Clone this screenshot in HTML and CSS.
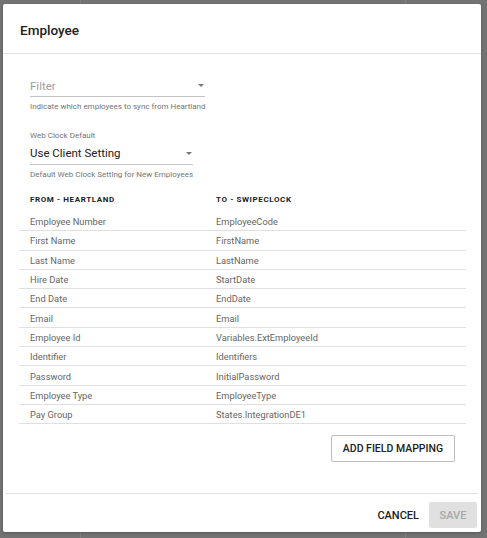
FILE: index.html
```html
<!DOCTYPE html>
<html>
<head>
<meta charset="utf-8">
<link rel="stylesheet" href="styles.css">
</head>
<body>
<div class="dialog">
  <div class="dlg-header"><h2 class="title">Employee</h2></div>
  <div class="dlg-content">
    <div class="field field-filter">
      <div class="select select-filter">
        <span class="placeholder">Filter</span>
        <span class="arrow"></span>
      </div>
      <div class="helper">Indicate which employees to sync from Heartland</div>
    </div>
    <div class="field field-clock">
      <div class="label">Web Clock Default</div>
      <div class="select select-clock">
        <span class="value">Use Client Setting</span>
        <span class="arrow"></span>
      </div>
      <div class="helper">Default Web Clock Setting for New Employees</div>
    </div>
    <div class="table">
      <div class="thead">
        <div class="cell c1">FROM - HEARTLAND</div>
        <div class="cell c2">TO - SWIPECLOCK</div>
      </div>
      <div class="row"><div class="cell c1">Employee Number</div><div class="cell c2">EmployeeCode</div></div>
      <div class="row"><div class="cell c1">First Name</div><div class="cell c2">FirstName</div></div>
      <div class="row"><div class="cell c1">Last Name</div><div class="cell c2">LastName</div></div>
      <div class="row"><div class="cell c1">Hire Date</div><div class="cell c2">StartDate</div></div>
      <div class="row"><div class="cell c1">End Date</div><div class="cell c2">EndDate</div></div>
      <div class="row"><div class="cell c1">Email</div><div class="cell c2">Email</div></div>
      <div class="row"><div class="cell c1">Employee Id</div><div class="cell c2">Variables.ExtEmployeeId</div></div>
      <div class="row"><div class="cell c1">Identifier</div><div class="cell c2">Identifiers</div></div>
      <div class="row"><div class="cell c1">Password</div><div class="cell c2">InitialPassword</div></div>
      <div class="row"><div class="cell c1">Employee Type</div><div class="cell c2">EmployeeType</div></div>
      <div class="row"><div class="cell c1">Pay Group</div><div class="cell c2">States.IntegrationDE1</div></div>
    </div>
    <div class="add-wrap"><button class="btn-outline">ADD FIELD MAPPING</button></div>
  </div>
  <div class="dlg-footer">
    <button class="btn-text">CANCEL</button>
    <button class="btn-disabled">SAVE</button>
  </div>
</div>
</body>
</html>
```

FILE: styles.css
```css
html, body {
  margin: 0;
  padding: 0;
}
body {
  width: 487px;
  height: 538px;
  overflow: hidden;
  background-color: #737373;
  background-image:
    linear-gradient(to right, transparent 80px, #808080 80px, #808080 81px, transparent 81px),
    linear-gradient(to right, transparent 405px, #808080 405px, #808080 406px, transparent 406px);
  font-family: Roboto, "Liberation Sans", Arial, sans-serif;
}
.dialog {
  margin: 4px 6px 0 3px;
  width: 478px;
  height: 528px;
  background: #fff;
  border-radius: 2px;
  display: flex;
  flex-direction: column;
  box-shadow: 0 1px 3px rgba(0,0,0,0.25);
}
.dlg-header {
  height: 49px;
  border-bottom: 1px solid #e0e0e0;
  padding: 0 17px;
  display: flex;
  align-items: center;
}
.title {
  margin: 3px 0 0 0;
  font-size: 13.5px;
  font-weight: 500;
  color: #212121;
}
.dlg-content {
  flex: 1;
  padding: 0 15px 0 16px;
  display: flex;
  flex-direction: column;
}
.field {
  padding-left: 11px;
}
.field-filter {
  margin-top: 21px;
}
.select {
  height: 22px;
  border-bottom: 1px solid #c4c4c4;
  display: flex;
  align-items: center;
  justify-content: space-between;
  box-sizing: border-box;
}
.select-filter {
  width: 175px;
}
.select-clock {
  width: 163px;
  height: 23px;
}
.placeholder {
  font-size: 11.5px;
  color: #9e9e9e;
}
.value {
  font-size: 11.5px;
  color: #212121;
}
.arrow {
  width: 0;
  height: 0;
  border-left: 3.5px solid transparent;
  border-right: 3.5px solid transparent;
  border-top: 3.5px solid #777;
  margin-right: 1px;
}
.helper {
  margin-top: 4px;
  font-size: 8px;
  line-height: 12px;
  color: #757575;
}
.field-clock {
  margin-top: 17px;
}
.label {
  font-size: 8px;
  line-height: 12px;
  color: #757575;
}
.table {
  margin-top: 5px;
  display: flex;
  flex-direction: column;
}
.thead, .row {
  display: flex;
  align-items: center;
}
.thead {
  height: 26px;
}
.row {
  height: 19.3px;
  box-sizing: border-box;
  border-bottom: 1px solid #e0e0e0;
  padding-top: 1px;
}
.cell {
  font-size: 9.3px;
  color: #666;
  white-space: nowrap;
}
.c1 {
  width: 186px;
  padding-left: 11px;
}
.thead .cell {
  font-size: 8px;
  letter-spacing: 0.6px;
  font-weight: 700;
  color: #212121;
}
.add-wrap {
  display: flex;
  justify-content: flex-end;
  margin-top: 11px;
  padding-right: 11px;
}
.btn-outline {
  width: 124px;
  height: 27px;
  background: #fff;
  border: 1px solid #bdbdbd;
  border-radius: 2px;
  font-family: Roboto, "Liberation Sans", Arial, sans-serif;
  font-size: 10.5px;
  font-weight: 500;
  color: #212121;
  padding: 0;
}
.dlg-footer {
  box-sizing: border-box;
  margin: 0 3px;
  height: 39px;
  flex-shrink: 0;
  border-top: 1px solid #e0e0e0;
  display: flex;
  justify-content: flex-end;
  align-items: flex-end;
  gap: 10px;
  padding-right: 1px;
  padding-bottom: 4px;
}
.btn-text {
  background: none;
  border: none;
  padding: 0;
  height: 26px;
  font-family: Roboto, "Liberation Sans", Arial, sans-serif;
  font-size: 11px;
  font-weight: 500;
  color: #212121;
}
.btn-disabled {
  width: 48px;
  height: 26px;
  background: #e0e0e0;
  border: none;
  border-radius: 2px;
  padding: 0;
  font-family: Roboto, "Liberation Sans", Arial, sans-serif;
  font-size: 11px;
  font-weight: 500;
  color: #a8a8a8;
}
```
